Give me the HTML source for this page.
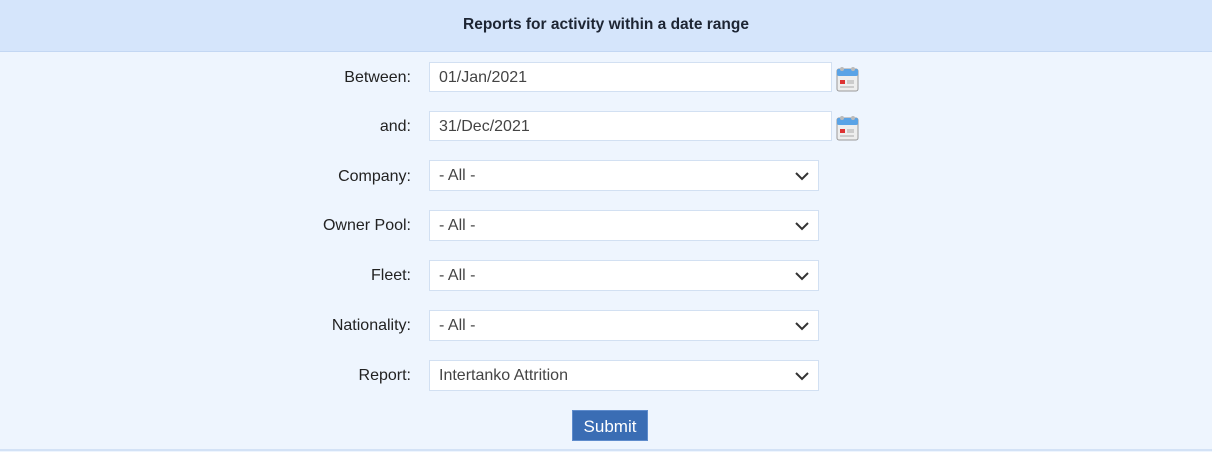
<!DOCTYPE html>
<html><head><style>
body{margin:0;width:1212px;height:452px;background:#eef5fe;font-family:"Liberation Sans",sans-serif;font-size:16px;color:#222;position:relative;overflow:hidden}
.hdr{position:absolute;left:0;top:0;width:1212px;height:51px;background:#d5e5fb;border-bottom:1px solid #c3d7f3;text-align:center;line-height:50px;font-weight:bold;font-size:15.5px;color:#1d2533}
.lbl{position:absolute;right:801px;text-align:right;line-height:32px}
.in{position:absolute;left:429px;background:#fff;border:1px solid #d2e0f2;box-sizing:border-box;line-height:30px;padding-left:9px;color:#444}
.d{width:403px;height:30px}
.s{width:390px;height:31px}
.s svg{position:absolute;right:8px;top:9px}
.cal{position:absolute;left:836px}
.btn{position:absolute;left:572px;top:410px;width:76px;height:31px;background:#3a6db4;color:#fff;text-align:center;line-height:31px;font-size:17px;border:1px solid #5f8ccc;box-sizing:border-box}
.foot{position:absolute;left:0;top:449px;width:1212px;height:2px;background:#d3e2f6}
</style></head><body>
<div class="hdr">Reports for activity within a date range</div>
<div class="lbl" style="top:62px">Between:</div>
<div class="in d" style="top:62px">01/Jan/2021</div>
<div class="lbl" style="top:111px">and:</div>
<div class="in d" style="top:111px">31/Dec/2021</div>
<svg class="cal" style="top:66px" width="23" height="26" viewBox="0 0 23 26"><rect x="1" y="3" width="21" height="22" rx="2" fill="#eee" stroke="#999"/><rect x="1" y="3" width="21" height="7" rx="2" fill="#5aa3e6"/><circle cx="6" cy="3" r="2" fill="#bbb"/><circle cx="17" cy="3" r="2" fill="#bbb"/><rect x="4" y="14" width="5" height="4" fill="#d33"/><rect x="11" y="14" width="7" height="4" fill="#ccc"/><rect x="4" y="20" width="14" height="2" fill="#ccc"/></svg>
<svg class="cal" style="top:115px" width="23" height="26" viewBox="0 0 23 26"><rect x="1" y="3" width="21" height="22" rx="2" fill="#eee" stroke="#999"/><rect x="1" y="3" width="21" height="7" rx="2" fill="#5aa3e6"/><circle cx="6" cy="3" r="2" fill="#bbb"/><circle cx="17" cy="3" r="2" fill="#bbb"/><rect x="4" y="14" width="5" height="4" fill="#d33"/><rect x="11" y="14" width="7" height="4" fill="#ccc"/><rect x="4" y="20" width="14" height="2" fill="#ccc"/></svg>

<div class="lbl" style="top:161px">Company:</div>
<div class="in s" style="top:160px">- All -<svg width="16" height="12" viewBox="0 0 16 12"><path d="M2 3l6 6 6-6" fill="none" stroke="#333" stroke-width="2"/></svg></div>
<div class="lbl" style="top:210px">Owner Pool:</div>
<div class="in s" style="top:210px">- All -<svg width="16" height="12" viewBox="0 0 16 12"><path d="M2 3l6 6 6-6" fill="none" stroke="#333" stroke-width="2"/></svg></div>
<div class="lbl" style="top:260px">Fleet:</div>
<div class="in s" style="top:260px">- All -<svg width="16" height="12" viewBox="0 0 16 12"><path d="M2 3l6 6 6-6" fill="none" stroke="#333" stroke-width="2"/></svg></div>
<div class="lbl" style="top:310px">Nationality:</div>
<div class="in s" style="top:310px">- All -<svg width="16" height="12" viewBox="0 0 16 12"><path d="M2 3l6 6 6-6" fill="none" stroke="#333" stroke-width="2"/></svg></div>
<div class="lbl" style="top:360px">Report:</div>
<div class="in s" style="top:360px">Intertanko Attrition<svg width="16" height="12" viewBox="0 0 16 12"><path d="M2 3l6 6 6-6" fill="none" stroke="#333" stroke-width="2"/></svg></div>
<div class="btn">Submit</div>
<div class="foot"></div>
</body></html>
